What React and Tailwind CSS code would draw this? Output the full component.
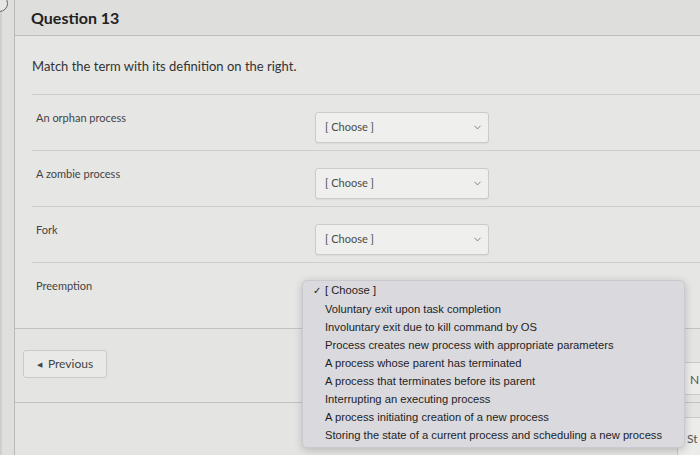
import { ChevronDown } from 'lucide-react';

const terms = ['An orphan process', 'A zombie process', 'Fork', 'Preemption'];

const options = [
  'Voluntary exit upon task completion',
  'Involuntary exit due to kill command by OS',
  'Process creates new process with appropriate parameters',
  'A process whose parent has terminated',
  'A process that terminates before its parent',
  'Interrupting an executing process',
  'A process initiating creation of a new process',
  'Storing the state of a current process and scheduling a new process',
];

const Select = () => (
  <div className="w-[174px] h-[31px] bg-[#efefed] border border-[#cbcbc9] rounded-[3px] flex items-center justify-between pl-[9px] pr-[5px] shadow-[0_1px_1px_rgba(0,0,0,0.05)]">
    <span className="text-[11px] text-[#4a4a4a]">[ Choose ]</span>
    <ChevronDown size={11} strokeWidth={2} className="text-[#777]" />
  </div>
);

const App = () => {
  return (
    <div className="relative w-[700px] h-[455px] overflow-hidden bg-[#e4e4e2] flex font-['Lato','Open_Sans',sans-serif]">
      {/* left strip */}
      <div className="w-[15px] shrink-0 bg-[#dfdfdd] border-l-[2px] border-l-[#cfcfcd] border-r border-r-[#b9b9b7] relative">
        <div className="absolute -left-[11px] -top-[5px] w-[17px] h-[17px] rounded-full border-[1.5px] border-[#666] bg-[#e6e6e4]" />
      </div>

      <div className="flex-1 flex flex-col">
        {/* question box */}
        <div className="shrink-0 border-b border-[#c3c3c1] h-[329px] flex flex-col">
          <div className="h-[36px] bg-[#dededc] border-b border-[#bdbdbb] flex items-center pl-[16px]">
            <span className="text-[16px] font-bold text-[#222]">Question 13</span>
          </div>
          <div className="pl-[17px] flex-1 flex flex-col bg-[#e6e6e4]">
            <div className="h-[59px] border-b border-[#cfcfcd] flex items-center pt-[4px]">
              <span className="text-[13px] text-[#333]">Match the term with its definition on the right.</span>
            </div>
            {terms.map((t, i) => (
              <div
                key={t}
                className={`flex pt-[15px] ${i < 3 ? 'h-[56px] border-b border-[#cfcfcd]' : 'flex-1'}`}
              >
                <div className="w-[283px] pl-[4px] text-[11px] text-[#444]">{t}</div>
                {i < 3 && (
                  <div className="pt-[2px]">
                    <Select />
                  </div>
                )}
              </div>
            ))}
          </div>
        </div>

        {/* nav buttons */}
        <div className="shrink-0 h-[74px] border-b border-[#c3c3c1] flex items-start justify-between pt-[21px]">
          <div className="ml-[8px] w-[84px] h-[28px] bg-[#e9e9e7] border border-[#cacac8] rounded-[3px] flex items-center justify-center gap-[6px] text-[12px] text-[#444]">
            <span className="text-[7px]">◀</span>
            <span>Previous</span>
          </div>
          <div className="mt-[12px] w-[18px] h-[33px] bg-[#ececea] border border-[#cacac8] border-r-0 rounded-l-[3px] pl-[7px] pt-[8px] text-[12px] text-[#555]">N</div>
        </div>
        <div className="flex-1 flex justify-end items-start pt-[14px] border-b border-[#c9c9c7] mb-[5px]">
          <div className="w-[23px] h-[40px] bg-[#ececea] border border-[#cacac8] border-r-0 rounded-l-[3px] pl-[9px] pt-[12px] text-[12px] text-[#555]">St</div>
        </div>
      </div>

      {/* open dropdown */}
      <div className="absolute left-[302px] top-[280px] w-[383px] h-[168px] bg-[#d9d9de] rounded-[5px] shadow-[0_2px_8px_rgba(0,0,0,0.2)] border border-[#c9c9cf] font-['Liberation_Sans',Arial,sans-serif] text-[11.2px] text-[#1e1e1e]">
        <div className="h-[19px] flex items-center pl-[10px]">
          <span className="w-[12px] text-[10px]">✓</span>
          <span>[ Choose ]</span>
        </div>
        {options.map((o) => (
          <div key={o} className="h-[18px] flex items-center pl-[22px]">
            {o}
          </div>
        ))}
      </div>
    </div>
  );
};

export default App;
